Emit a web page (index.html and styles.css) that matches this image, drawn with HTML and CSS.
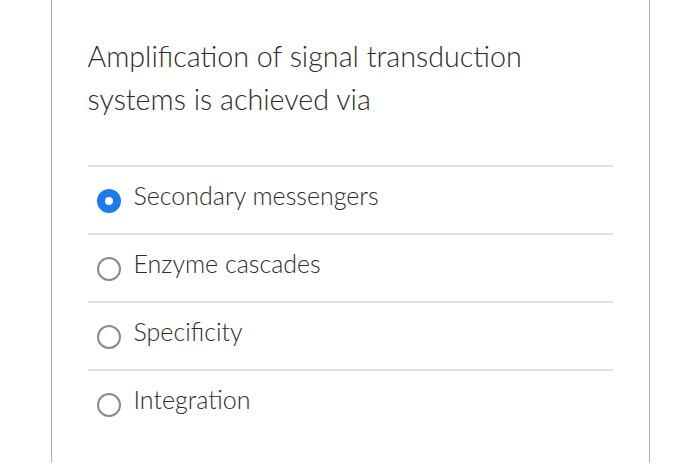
FILE: index.html
```html
<!DOCTYPE html>
<html lang="en">
<head>
<meta charset="utf-8">
<title>Question</title>
<link rel="stylesheet" href="styles.css">
</head>
<body>
<div class="card">
  <p class="question">Amplification of signal transduction systems is achieved via</p>
  <ul class="options">
    <li class="option selected"><span class="radio"></span><span class="label">Secondary messengers</span></li>
    <li class="option"><span class="radio"></span><span class="label">Enzyme cascades</span></li>
    <li class="option"><span class="radio"></span><span class="label">Specificity</span></li>
    <li class="option"><span class="radio"></span><span class="label">Integration</span></li>
  </ul>
</div>
</body>
</html>
```
FILE: styles.css
```css
html, body {
  margin: 0;
  padding: 0;
  background: #ffffff;
}
body {
  font-family: Lato, "Open Sans", sans-serif;
  font-weight: 300;
  color: #2b2b2b;
  padding-left: 51px;
}
.card {
  width: 599px;
  height: 463px;
  border-left: 1.5px solid #b4b4b4;
  border-right: 1.5px solid #b4b4b4;
  box-sizing: border-box;
  padding: 35px 36.5px 0 35.5px;
}
.question {
  margin: 0 0 44px 0;
  font-size: 28.7px;
  line-height: 43px;
  width: 480px;
}
.options {
  list-style: none;
  margin: 0;
  padding: 0;
}
.option {
  display: flex;
  align-items: flex-start;
  gap: 13px;
  border-top: 2px solid #e3e3e3;
  height: 68px;
  box-sizing: border-box;
  padding: 13px 0 0 9px;
  font-size: 25px;
  line-height: 30px;
}
.radio {
  width: 24px;
  height: 24px;
  margin-top: 9px;
  box-sizing: border-box;
  border-radius: 50%;
  border: 2.5px solid #8a8a8a;
  flex: none;
}
.option.selected .radio {
  border: 8px solid #1a7cf0;
}
.label {
  color: #2b2b2b;
}
```
